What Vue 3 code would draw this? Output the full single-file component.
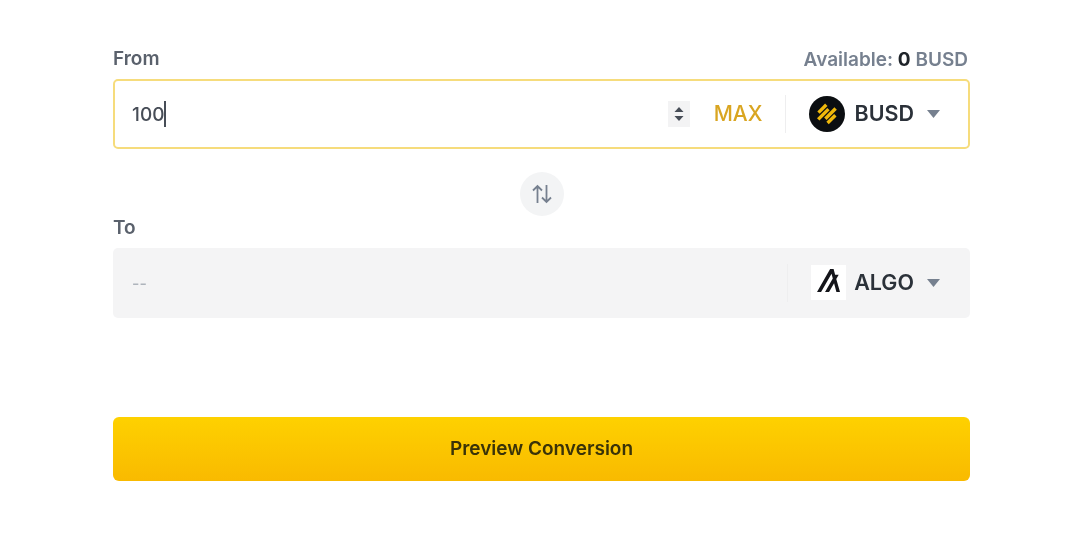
<script setup>
const title = 'Preview Conversion'
</script>

<template>
  <main class="page">
    <div class="label-row">
      <span class="label">From</span>
      <span class="available">Available: <b>0</b> BUSD</span>
    </div>
    <div class="field field-active">
      <span class="value">100<i class="caret"></i></span>
      <span class="stepper">
        <svg width="12" height="20" viewBox="0 0 12 20"><path d="M6 3 10.500 8H1.500z" fill="#474d57"/><path d="M6 17 1.500 12h9z" fill="#474d57"/></svg>
      </span>
      <span class="max">MAX</span>
      <span class="divider"></span>
      <span class="coin coin-busd">
        <svg width="36" height="36" viewBox="0 0 36 36">
          <circle cx="18" cy="18" r="18" fill="#0b0e11"/>
          <g fill="#f0b90b" transform="rotate(-45 18 18)">
            <rect x="13" y="9.300" width="11" height="3.400" />
            <rect x="8" y="13.900" width="14.500" height="3.400" />
            <rect x="13.500" y="18.500" width="14.500" height="3.400" />
            <rect x="12" y="23.100" width="11" height="3.400" />
          </g>
        </svg>
      </span>
      <span class="symbol">BUSD</span>
      <svg class="arrow" width="13" height="8" viewBox="0 0 13 8"><path d="M0 0h13L6.500 8z" fill="#76808f"/></svg>
    </div>

    <div class="swap-row">
      <span class="swap">
        <svg width="22" height="22" viewBox="0 0 22 22" fill="none" stroke="#76808f" stroke-width="1.8">
          <path d="M6.500 20V3M2 7.500l4.500-4.500L11 7.500"/>
          <path d="M15.500 2v17M11 14.500l4.500 4.500 4.500-4.500"/>
        </svg>
      </span>
    </div>

    <div class="label to-label">To</div>
    <div class="field field-muted">
      <span class="placeholder">--</span>
      <span class="divider"></span>
      <span class="coin coin-algo">
        <svg width="23" height="23" viewBox="0 0 32 32" fill="#14151a">
          <path d="M32 32h-5l-3.250-12.090-6.990 12.090h-5.590l10.800-18.720-1.740-6.500L5.670 32H0L18.260 0h4.840l2.120 7.860h4.990l-3.410 5.930z"/>
        </svg>
      </span>
      <span class="symbol symbol-algo">ALGO</span>
      <svg class="arrow" width="13" height="8" viewBox="0 0 13 8"><path d="M0 0h13L6.500 8z" fill="#76808f"/></svg>
    </div>

    <button class="cta" type="button">{{ title }}</button>
  </main>
</template>

<style>
html, body { margin: 0; background: #fff; }
</style>

<style scoped>
.page {
  box-sizing: border-box;
  width: 1080px;
  height: 547px;
  padding: 48px 110px 0 113px;
  font-family: Inter, "Noto Sans", sans-serif;
  color: #1e2329;
  overflow: hidden;
  filter: blur(0.5px);
}
.label-row {
  display: flex;
  justify-content: space-between;
  align-items: center;
  height: 22px;
  margin-bottom: 9px;
}
.label {
  font-size: 19px;
  font-weight: 600;
  color: #5a616c;
  line-height: 22px;
}
.available {
  margin-right: 2px;
  font-size: 19px;
  font-weight: 600;
  color: #76808f;
}
.available b { color: #1e2329; font-weight: 700; }
.field {
  box-sizing: border-box;
  height: 70px;
  display: flex;
  align-items: center;
  border-radius: 5px;
}
.field-active {
  border: 2px solid #f6dc7c;
  padding: 0 28px 0 17px;
}
.field-muted {
  background: #f4f4f5;
  padding: 0 30px 0 19px;
}
.value {
  flex: 1;
  display: flex;
  align-items: center;
  font-size: 19px;
  font-weight: 500;
  color: #474d57;
}
.caret {
  width: 1.500px;
  height: 26px;
  background: #474d57;
}
.stepper {
  width: 22px;
  height: 26px;
  background: #f3f3f4;
  display: flex;
  align-items: center;
  justify-content: center;
}
.max {
  margin-left: 24px;
  padding-bottom: 2px;
  font-size: 21px;
  font-weight: 500;
  color: #d9a521;
}
.divider {
  width: 1px;
  height: 38px;
  background: #eeeeef;
  margin: 0 23px;
}
.coin { display: flex; align-items: center; justify-content: center; }
.coin-busd { width: 36px; height: 36px; }
.coin-algo {
  box-sizing: border-box;
  width: 35px;
  height: 35px;
  padding-bottom: 3px;
  margin-bottom: 2px;
  background: #fff;
}
.symbol {
  margin-left: 9px;
  padding-bottom: 2px;
  font-size: 21.500px;
  font-weight: 600;
  color: #2b3139;
}
.symbol-algo { margin-left: 8px; }
.arrow { margin-left: 13px; }
.swap-row {
  display: flex;
  justify-content: center;
  margin-top: 23px;
  height: 44px;
}
.swap {
  width: 44px;
  height: 44px;
  border-radius: 50%;
  background: #f3f4f5;
  display: flex;
  align-items: center;
  justify-content: center;
}
.to-label { margin-top: 1px; margin-bottom: 9px; height: 22px; }
.placeholder {
  flex: 1;
  font-size: 16px;
  font-weight: 500;
  color: #aeb4bc;
}
.cta {
  display: block;
  width: 100%;
  height: 64px;
  margin-top: 99px;
  padding: 0 0 2px;
  border: 0;
  border-radius: 6px;
  background: linear-gradient(180deg, #fed100 0%, #f9ba00 100%);
  font-family: inherit;
  font-size: 19px;
  font-weight: 600;
  color: #3a3308;
}
</style>
